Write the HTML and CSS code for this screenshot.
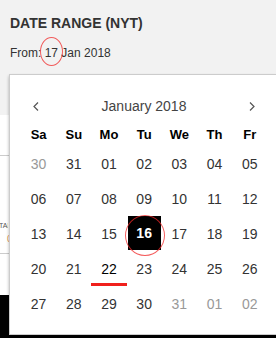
FILE: index.html
```html
<!DOCTYPE html>
<html lang="en">
  <head>
    <meta charset="utf-8" />
    <meta name="viewport" content="width=device-width, initial-scale=1" />
    <title>Date range</title>
    <link rel="stylesheet" href="styles.css">
  </head>
  <body>
    <div class="page-head">
      <h2>DATE RANGE (NYT)</h2>
      <p class="range">From: <span class="mark">17</span> Jan 2018</p>
    </div>

    <div class="table">
      <div class="row first"></div>
      <div class="row second">
        <span class="cell-label">TAB</span>
        <span class="cell-sub">(</span>
      </div>
      <div class="row third"></div>
      <div class="row dark"></div>
    </div>

    <div class="picker">
      <div class="nav">
        <svg class="chev" width="6" height="9" viewBox="0 0 6 9"><polyline points="5,0.5 1,4.5 5,8.5" /></svg>
        <div class="month">January 2018</div>
        <svg class="chev" width="6" height="9" viewBox="0 0 6 9"><polyline points="1,0.5 5,4.5 1,8.5" /></svg>
      </div>

      <div class="days">
        <div class="dow">Sa</div>
        <div class="dow">Su</div>
        <div class="dow">Mo</div>
        <div class="dow">Tu</div>
        <div class="dow">We</div>
        <div class="dow">Th</div>
        <div class="dow">Fr</div>

        <div class="day muted">30</div>
        <div class="day">31</div>
        <div class="day">01</div>
        <div class="day">02</div>
        <div class="day">03</div>
        <div class="day">04</div>
        <div class="day">05</div>

        <div class="day">06</div>
        <div class="day">07</div>
        <div class="day">08</div>
        <div class="day">09</div>
        <div class="day">10</div>
        <div class="day">11</div>
        <div class="day">12</div>

        <div class="day">13</div>
        <div class="day">14</div>
        <div class="day">15</div>
        <div class="day selected">16</div>
        <div class="day">17</div>
        <div class="day">18</div>
        <div class="day">19</div>

        <div class="day">20</div>
        <div class="day">21</div>
        <div class="day today">22</div>
        <div class="day">23</div>
        <div class="day">24</div>
        <div class="day">25</div>
        <div class="day">26</div>

        <div class="day">27</div>
        <div class="day">28</div>
        <div class="day">29</div>
        <div class="day">30</div>
        <div class="day muted">31</div>
        <div class="day muted">01</div>
        <div class="day muted">02</div>
      </div>
    </div>
  </body>
</html>
```

FILE: styles.css
```css
*,
*::before,
*::after {
  box-sizing: border-box;
  margin: 0;
}

html,
body {
  overflow: hidden;
}

body {
  background: #f2f2f2;
  color: #333;
  font-family: "Liberation Sans", Arial, sans-serif;
  height: 338px;
  position: relative;
}

.page-head {
  height: 115px;
  padding: 15px 10px 0;
}

.page-head h2 {
  font-size: 14px;
  font-weight: bold;
  line-height: 16px;
}

.range {
  font-size: 12px;
  line-height: 14px;
  margin-top: 15px;
  position: relative;
}

/* hand-drawn style annotation round the start day */
.mark {
  position: relative;
}

.mark::after {
  border: 1px solid rgba(240, 40, 40, 0.75);
  border-radius: 50%;
  content: "";
  height: 29px;
  left: -5px;
  position: absolute;
  top: -9px;
  width: 23px;
}

.table {
  background: #fff;
}

.row {
  border-bottom: 1px solid #ccc;
}

.row.first {
  height: 41px;
}

.row.second {
  height: 98px;
  padding-top: 66px;
}

.row.third {
  border-bottom: 0;
  height: 41px;
}

.row.dark {
  background: #000;
  border-bottom: 0;
  height: 43px;
}

.cell-label {
  color: #555;
  display: block;
  font-size: 7px;
  line-height: 8px;
  margin-left: -1px;
  overflow: hidden;
  white-space: nowrap;
  width: 9px;
}

.cell-sub {
  color: #e0802a;
  display: block;
  font-size: 7px;
  line-height: 8px;
  margin-top: 4px;
  padding-left: 7px;
}

.picker {
  background: #fff;
  border: 1px solid #ccc;
  border-right: 0;
  box-shadow: 0 2px 3px rgba(0, 0, 0, 0.3);
  left: 9px;
  padding: 19px 0 13px 11px;
  position: absolute;
  right: 0;
  top: 74px;
}

.nav {
  align-items: center;
  display: flex;
  height: 24px;
  margin-bottom: 4px;
  padding: 0 12px 0 12px;
  width: 246px;
}

.chev {
  fill: none;
  stroke: #555;
  stroke-width: 1.2;
}

.month {
  color: #444;
  flex: 1;
  font-size: 14px;
  text-align: center;
}

.days {
  display: grid;
  grid-auto-rows: 35px;
  grid-template-columns: repeat(7, 35.2px);
  grid-template-rows: 24px;
}

.dow {
  align-items: center;
  color: #000;
  display: flex;
  font-size: 13px;
  font-weight: bold;
  justify-content: center;
}

.day {
  align-items: center;
  color: #333;
  display: flex;
  font-size: 14px;
  justify-content: center;
  position: relative;
}

.day.muted {
  color: #999;
}

.day.today {
  box-shadow: inset 0 -3px 0 #f0201c;
  color: #000;
}

.day.selected {
  background: #000;
  color: #fff;
  font-weight: bold;
  margin: 0 1px 1px;
}

.day.selected::after {
  border: 1px solid rgba(240, 40, 40, 0.75);
  border-radius: 50%;
  content: "";
  height: 41px;
  left: -3px;
  position: absolute;
  top: -1px;
  width: 40px;
}
```
